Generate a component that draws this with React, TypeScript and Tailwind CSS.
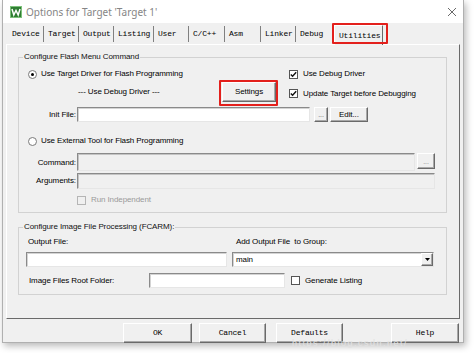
import React from "react";

const sunken =
  "bg-white border border-t-[#8a8a8a] border-l-[#8a8a8a] border-r-[#e6e6e6] border-b-[#e6e6e6] shadow-[inset_1px_1px_0_#d4d4d4]";
const raised =
  "bg-[#f0f0f0] border border-t-white border-l-white border-r-[#6a6a6a] border-b-[#6a6a6a] shadow-[inset_-1px_-1px_0_#a8a8a8]";
const mono = "font-['Liberation_Mono','Courier_New',monospace] text-[8px] tracking-[-0.2px]";

function Radio({ checked }: { checked?: boolean }) {
  return (
    <span className="w-[9px] h-[9px] rounded-full bg-white border border-[#7a7a7a] flex items-center justify-center shrink-0">
      {checked && <span className="w-[3px] h-[3px] rounded-full bg-black" />}
    </span>
  );
}

function Check({ checked, disabled }: { checked?: boolean; disabled?: boolean }) {
  return (
    <span
      className={`w-[9px] h-[9px] border shrink-0 flex items-center justify-center ${
        disabled ? "border-[#b5b5b5] bg-[#f0f0f0]" : "border-[#555] bg-white"
      }`}
    >
      {checked && (
        <svg width="7" height="7" viewBox="0 0 7 7">
          <path d="M0.8 3.4 L2.6 5.3 L6.2 1.2" fill="none" stroke="#111" strokeWidth="1.4" />
        </svg>
      )}
    </span>
  );
}

function Group({ title, className, children }: { title: string; className?: string; children: React.ReactNode }) {
  return (
    <fieldset className={`m-0 p-0 border border-[#d2d2d2] ml-[11px] w-[429px] ${className ?? ""}`}>
      <legend className="ml-[4px] px-[1px] leading-[10px] text-[#111]">{title}</legend>
      {children}
    </fieldset>
  );
}

const tabs: [string, number][] = [
  ["Device", 36],
  ["Target", 35],
  ["Output", 35],
  ["Listing", 40],
  ["User", 35],
  ["C/C++", 36],
  ["Asm", 36],
  ["Linker", 35],
  ["Debug", 37],
];

export default function App() {
  return (
    <div className="w-[474px] h-[353px] bg-white overflow-hidden relative font-['Liberation_Sans',Arial,sans-serif] text-[8px] tracking-[-0.1px] leading-none text-black">
      <div className="ml-[2px] w-[462px] h-[343px] bg-[#f0f0f0] border border-[#b0b0b0] border-t-0 shadow-[2px_3px_7px_rgba(0,0,0,0.28)] flex flex-col">
        {/* title bar */}
        <div className="h-[23px] bg-white flex items-center pl-[7px] pr-[6px] shrink-0">
          <svg width="12" height="12" viewBox="0 0 12 12">
            <rect x="0" y="0" width="12" height="12" fill="#2f7d32" />
            <rect x="0.5" y="0.5" width="11" height="11" fill="none" stroke="#7cc27a" />
            <polyline points="2,3 3.8,9 6,4.5 8.2,9 10,3" fill="none" stroke="#fff" strokeWidth="1.5" />
          </svg>
          <span className="ml-[4px] text-[10px] tracking-normal text-[#858585] font-['Noto_Sans','Liberation_Sans',sans-serif]">
            Options for Target 'Target 1'
          </span>
          <svg className="ml-auto" width="10" height="10" viewBox="0 0 10 10">
            <path d="M1 1 L9 9 M9 1 L1 9" stroke="#6a6a6a" strokeWidth="1" />
          </svg>
        </div>

        {/* tabs */}
        <div className={`h-[21px] flex items-end pl-[5px] shrink-0 ${mono}`}>
          {tabs.map(([t, w]) => (
            <div key={t} style={{ width: w }} className="h-[16px] mb-[2px] flex items-center pl-[4px] border-r border-[#808080]">
              {t}
            </div>
          ))}
          <div className="relative w-[49px] h-[20px] ml-[1px] flex items-center pl-[4px] bg-[#f0f0f0] border border-b-0 border-t-white border-l-white border-r-[#6a6a6a] translate-y-[1px]">
            Utilities
            <span className="absolute left-[-3px] top-[-3px] w-[56px] h-[21px] border-2 border-[#e3201c] rounded-[1px]" />
          </div>
        </div>

        {/* panel */}
        <div className="ml-[3px] w-[454px] h-[275px] border border-t-white border-l-white border-r-[#6a6a6a] border-b-[#6a6a6a] shrink-0 flex flex-col">
          <Group title="Configure Flash Menu Command" className="mt-[7px] pb-[6px]">
            <div className="mt-[6px] h-[12px] flex items-center">
              <div className="w-[270px] pl-[9px] flex items-center gap-[4px]">
                <Radio checked />
                <span>Use Target Driver for Flash Programming</span>
              </div>
              <div className="flex items-center gap-[5px]">
                <Check checked />
                <span>Use Debug Driver</span>
              </div>
            </div>
            <div className="mt-[2px] h-[20px] flex items-center">
              <div className="w-[203px] pl-[59px]">--- Use Debug Driver ---</div>
              <div className="relative">
                <div className={`w-[54px] h-[20px] flex items-center justify-center ${raised}`}>Settings</div>
                <span className="absolute left-[-3px] top-[-2px] w-[59px] h-[26px] border-2 border-[#e3201c] rounded-[1px]" />
              </div>
              <div className="ml-[13px] mt-[3px] flex items-center gap-[5px]">
                <Check checked />
                <span>Update Target before Debugging</span>
              </div>
            </div>
            <div className="mt-[5px] h-[15px] flex items-center">
              <span className="w-[57px] text-right">Init File:</span>
              <div className={`ml-[1px] w-[233px] h-[15px] ${sunken}`} />
              <div className={`ml-[4px] w-[14px] h-[15px] flex items-center justify-center text-[7px] text-[#666] ${raised}`}>...</div>
              <div className={`ml-[2px] w-[38px] h-[15px] flex items-center justify-center ${raised}`}>Edit...</div>
            </div>
            <div className="mt-[13px] h-[12px] pl-[9px] flex items-center gap-[4px]">
              <Radio />
              <span>Use External Tool for Flash Programming</span>
            </div>
            <div className="mt-[6px] h-[18px] flex items-start">
              <span className="w-[57px] text-right mt-[6px]">Command:</span>
              <div className="ml-[1px] w-[338px] h-[18px] bg-[#f0f0f0] border border-t-[#8a8a8a] border-l-[#8a8a8a] border-r-[#e6e6e6] border-b-[#e6e6e6] shadow-[inset_1px_1px_0_#c4c4c4]" />
              <div className={`ml-[2px] w-[18px] h-[16px] flex items-center justify-center text-[7px] text-[#888] ${raised}`}>...</div>
            </div>
            <div className="mt-[2px] h-[16px] flex items-center">
              <span className="w-[57px] text-right">Arguments:</span>
              <div className="ml-[1px] w-[358px] h-[16px] bg-[#f0f0f0] border border-t-[#8a8a8a] border-l-[#8a8a8a] border-r-[#e6e6e6] border-b-[#e6e6e6] shadow-[inset_1px_1px_0_#c4c4c4]" />
            </div>
            <div className="mt-[5px] h-[12px] pl-[58px] flex items-center gap-[5px] text-[#9a9a9a]">
              <Check disabled />
              <span>Run Independent</span>
            </div>
          </Group>

          <Group title="Configure Image File Processing (FCARM):" className="mt-[9px] pb-[6px]">
            <div className="mt-[5px] h-[10px] flex items-center">
              <span className="w-[217px] pl-[9px]">Output File:</span>
              <span>Add Output File&nbsp; to Group:</span>
            </div>
            <div className="mt-[5px] h-[15px] flex items-center">
              <div className={`ml-[7px] w-[201px] h-[15px] ${sunken}`} />
              <div className={`ml-[5px] w-[202px] h-[15px] flex items-center pl-[3px] ${sunken}`}>
                <span className="flex-1">main</span>
                <div className={`w-[12px] h-[13px] flex items-center justify-center ${raised}`}>
                  <svg width="5" height="3" viewBox="0 0 5 3">
                    <path d="M0 0 H5 L2.5 3 Z" fill="#000" />
                  </svg>
                </div>
              </div>
            </div>
            <div className="mt-[6px] h-[15px] flex items-center">
              <span className="w-[130px] pl-[10px]">Image Files Root Folder:</span>
              <div className={`w-[136px] h-[15px] ${sunken}`} />
              <div className="ml-[6px] flex items-center gap-[5px]">
                <Check />
                <span>Generate Listing</span>
              </div>
            </div>
          </Group>
        </div>

        {/* buttons */}
        <div className={`mt-[4px] h-[20px] flex ${mono}`}>
          <div className={`ml-[120px] w-[69px] h-[20px] flex items-center justify-center ${raised}`}>OK</div>
          <div className={`ml-[7px] w-[67px] h-[20px] flex items-center justify-center ${raised}`}>Cancel</div>
          <div className={`ml-[10px] w-[67px] h-[20px] flex items-center justify-center ${raised}`}>Defaults</div>
          <div className={`ml-[48px] w-[68px] h-[20px] flex items-center justify-center ${raised}`}>Help</div>
        </div>
      </div>
      <span className="absolute left-[292px] top-[339px] text-[9px] leading-none text-[#e2e2e2] tracking-[1.5px] font-['Liberation_Sans',sans-serif]">
        https://blog.csdn.net/
      </span>
    </div>
  );
}
